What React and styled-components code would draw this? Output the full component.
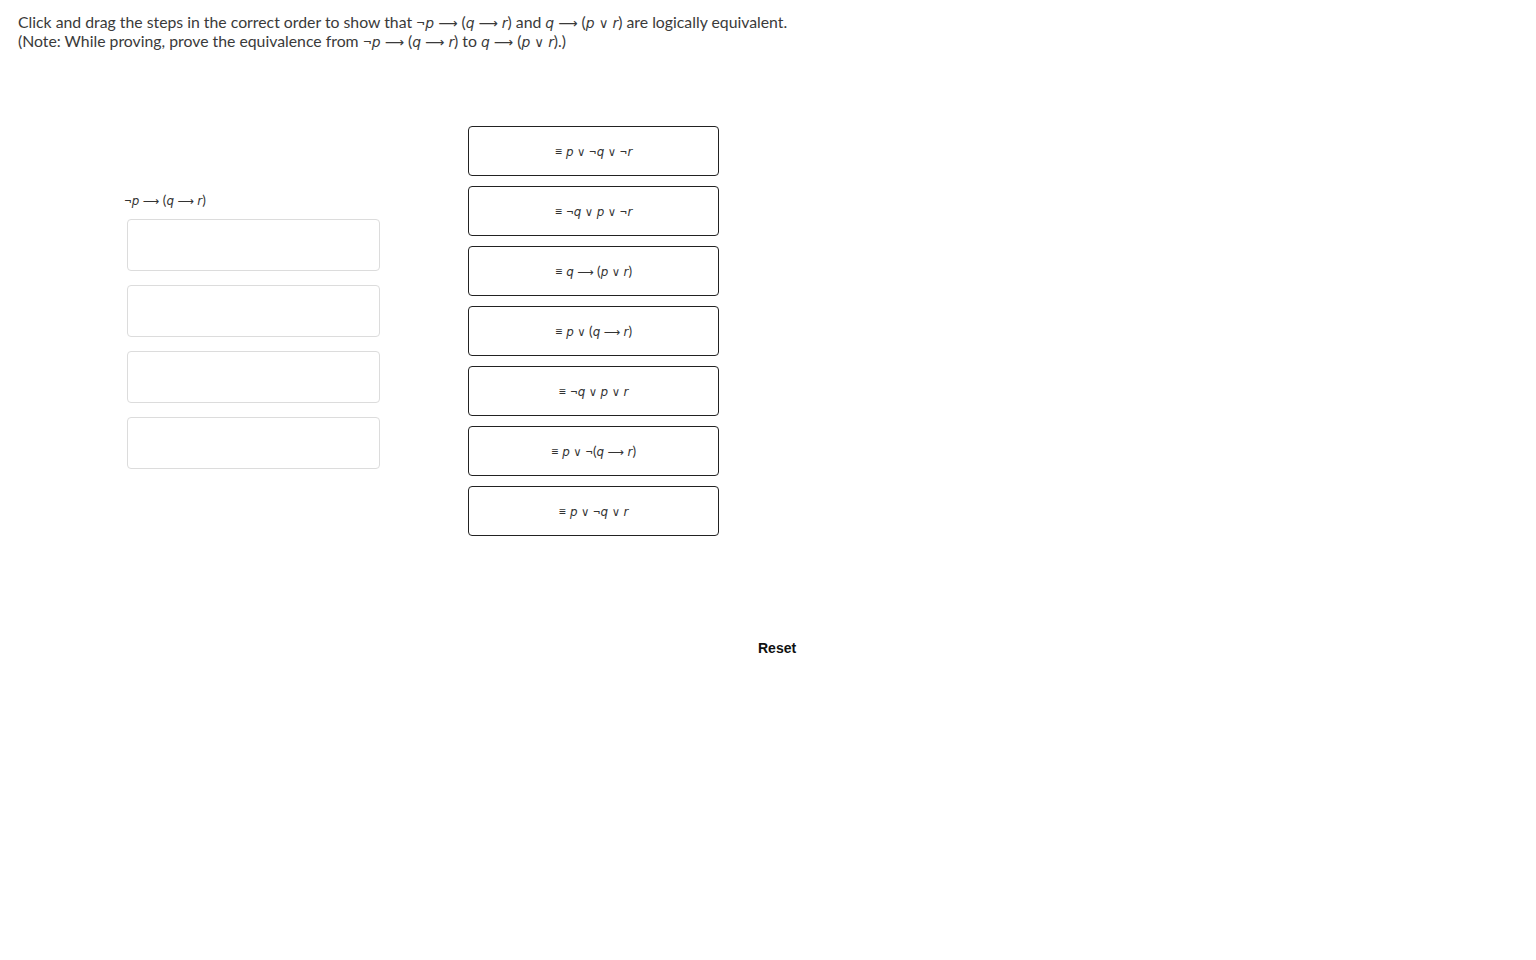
import React from "react";
import styled, { createGlobalStyle } from "styled-components";

const Global = createGlobalStyle`
  html, body { margin: 0; padding: 0; background: #fff; }
  body { font-family: Lato, "Open Sans", "Liberation Sans", sans-serif; color: #333; }
`;

const Page = styled.div`
  padding: 12px 18px 0 18px;
  width: 1536px;
  box-sizing: border-box;
`;

const Instructions = styled.div`
  font-size: 15.8px;
  line-height: 19px;
  color: #3a3a3a;
`;

const V = styled.i`
  font-family: "DejaVu Sans", "Liberation Sans", sans-serif;
  font-style: italic;
  font-size: 0.88em;
  line-height: 1;
`;

const Op = styled.span`
  font-family: "DejaVu Sans", sans-serif;
  font-size: 0.85em;
  line-height: 1;
`;

const Workspace = styled.div`
  display: flex;
  align-items: flex-start;
  margin-top: 76px;
  padding-left: 106px;
`;

const LeftColumn = styled.div`
  display: flex;
  flex-direction: column;
  padding-top: 66px;
  width: 256px;
`;

const Start = styled.div`
  font-size: 13.5px;
  line-height: 16px;
  height: 16px;
  margin-bottom: 11px;
  color: #333;
`;

const DropZones = styled.div`
  display: flex;
  flex-direction: column;
  gap: 14px;
  padding-left: 3px;
`;

const DropZone = styled.div`
  width: 253px;
  height: 52px;
  box-sizing: border-box;
  border: 1px solid #dcdcdc;
  border-radius: 4px;
  background: #fff;
`;

const Bank = styled.div`
  display: flex;
  flex-direction: column;
  gap: 10px;
  margin-left: 88px;
`;

const Card = styled.div`
  width: 251px;
  height: 50px;
  box-sizing: border-box;
  border: 1px solid #222;
  border-radius: 4px;
  display: flex;
  align-items: center;
  justify-content: center;
  background: #fff;
`;

const CardText = styled.span`
  font-size: 13.5px;
  line-height: 16px;
  color: #333;
  white-space: pre;
`;

const Footer = styled.div`
  display: flex;
  margin-top: 104px;
  padding-left: 740px;
`;

const ResetButton = styled.button`
  border: none;
  background: transparent;
  font-family: "Liberation Sans", Arial, sans-serif;
  font-weight: bold;
  font-size: 14px;
  color: #111;
  padding: 0;
  cursor: pointer;
`;

const p = <V>p</V>;
const q = <V>q</V>;
const r = <V>r</V>;
const arrow = <Op>⟶</Op>;
const or = <Op>∨</Op>;

const cards = [
  <>≡ {p} {or} ¬{q} {or} ¬{r}</>,
  <>≡ ¬{q} {or} {p} {or} ¬{r}</>,
  <>≡ {q} {arrow} ({p} {or} {r})</>,
  <>≡ {p} {or} ({q} {arrow} {r})</>,
  <>≡ ¬{q} {or} {p} {or} {r}</>,
  <>≡ {p} {or} ¬({q} {arrow} {r})</>,
  <>≡ {p} {or} ¬{q} {or} {r}</>,
];

export default function App() {
  return (
    <Page>
      <Global />
      <Instructions>
        Click and drag the steps in the correct order to show that ¬{p} {arrow} ({q} {arrow} {r}) and {q} {arrow} ({p} <Op>∨</Op> {r}) are logically equivalent.
        <br />
        (Note: While proving, prove the equivalence from ¬{p} {arrow} ({q} {arrow} {r}) to {q} {arrow} ({p} <Op>∨</Op> {r}).)
      </Instructions>
      <Workspace>
        <LeftColumn>
          <Start>¬{p} {arrow} ({q} {arrow} {r})</Start>
          <DropZones>
            <DropZone />
            <DropZone />
            <DropZone />
            <DropZone />
          </DropZones>
        </LeftColumn>
        <Bank>
          {cards.map((c, i) => (
            <Card key={i}>
              <CardText>{c}</CardText>
            </Card>
          ))}
        </Bank>
      </Workspace>
      <Footer>
        <ResetButton>Reset</ResetButton>
      </Footer>
    </Page>
  );
}
